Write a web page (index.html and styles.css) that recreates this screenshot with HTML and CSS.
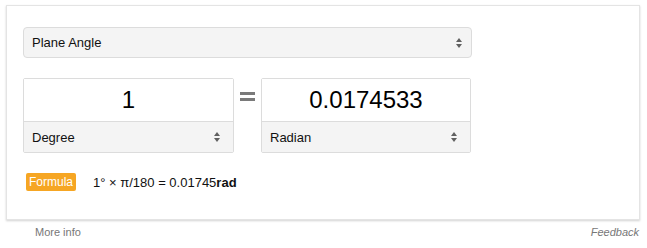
FILE: index.html
```html
<!DOCTYPE html>
<html>
<head>
<meta charset="utf-8">
<link rel="stylesheet" href="styles.css">
</head>
<body>
<div class="page">
  <div class="card">
    <div class="select select-main">
      <span class="select-label">Plane Angle</span>
      <span class="arrows"><span class="up"></span><span class="down"></span></span>
    </div>
    <div class="converter">
      <div class="box box-left">
        <div class="value">1</div>
        <div class="select unit">
          <span class="select-label">Degree</span>
          <span class="arrows"><span class="up"></span><span class="down"></span></span>
        </div>
      </div>
      <div class="equals"><span></span><span></span></div>
      <div class="box box-right">
        <div class="value">0.0174533</div>
        <div class="select unit">
          <span class="select-label">Radian</span>
          <span class="arrows"><span class="up"></span><span class="down"></span></span>
        </div>
      </div>
    </div>
    <div class="formula">
      <span class="badge">Formula</span>
      <span class="expr">1° × π/180 = 0.01745<b>rad</b></span>
    </div>
  </div>
  <div class="footer">
    <span class="more">More info</span>
    <span class="feedback">Feedback</span>
  </div>
</div>
</body>
</html>
```
FILE: styles.css
```css
html, body {
  margin: 0;
  padding: 0;
  background: #fff;
  font-family: "Liberation Sans", Arial, sans-serif;
  color: #222;
}
.page {
  padding: 5px 8px 0 6px;
  width: 634px;
}
.card {
  box-sizing: border-box;
  width: 634px;
  height: 215px;
  border: 1px solid #e4e4e4;
  box-shadow: 0 1px 2px rgba(0,0,0,0.18);
  padding: 21px 16px 0 16px;
}
.select {
  box-sizing: border-box;
  display: flex;
  align-items: center;
  justify-content: space-between;
  background: #f4f4f4;
  font-size: 13px;
  color: #111;
}
.select-main {
  width: 449px;
  height: 31px;
  border: 1px solid #dcdcdc;
  border-radius: 4px;
  padding: 0 9px 0 8px;
}
.arrows {
  display: flex;
  flex-direction: column;
  gap: 2px;
  width: 7px;
  align-items: center;
}
.up, .down {
  width: 0;
  height: 0;
  border-left: 3.5px solid transparent;
  border-right: 3.5px solid transparent;
}
.up { border-bottom: 4px solid #606060; }
.down { border-top: 4px solid #606060; }
.converter {
  display: flex;
  align-items: flex-start;
  margin-top: 20px;
}
.box {
  box-sizing: border-box;
  height: 75px;
  border: 1px solid #dcdcdc;
  border-radius: 2px;
  display: flex;
  flex-direction: column;
}
.box-left { width: 211px; }
.box-right { width: 210px; }
.value {
  height: 42px;
  display: flex;
  align-items: center;
  justify-content: center;
  font-size: 24px;
  color: #000;
  border-bottom: 1px solid #dcdcdc;
  background: #fff;
}
.unit {
  flex: 1;
  padding: 0 13px 0 8px;
}
.equals {
  width: 15px;
  margin: 14px 6px 0 6px;
  display: flex;
  flex-direction: column;
  gap: 3px;
}
.equals span {
  display: block;
  height: 3px;
  background: #7a7a7a;
}
.formula {
  display: flex;
  align-items: center;
  margin-top: 20px;
  margin-left: 3px;
}
.badge {
  background: #f6a623;
  color: #fff;
  font-size: 12px;
  height: 18px;
  line-height: 18px;
  padding: 0 3px;
  border-radius: 2px;
}
.expr {
  margin-left: 17px;
  font-size: 13px;
  color: #111;
}
.expr b { font-weight: bold; }
.footer {
  display: flex;
  justify-content: space-between;
  font-size: 11px;
  color: #777;
  padding: 6px 1px 0 29px;
}
.feedback { font-style: italic; }
```
